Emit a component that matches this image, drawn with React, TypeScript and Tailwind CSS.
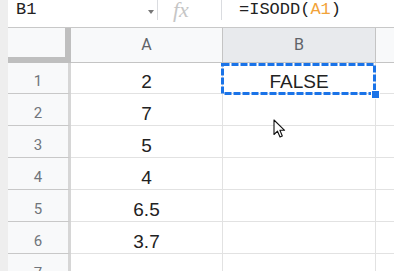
const rows = [
  { n: 1, a: "2", b: "FALSE" },
  { n: 2, a: "7", b: "" },
  { n: 3, a: "5", b: "" },
  { n: 4, a: "4", b: "" },
  { n: 5, a: "6.5", b: "" },
  { n: 6, a: "3.7", b: "" },
  { n: 7, a: "", b: "" },
]

const Selection = () => {
  return (
    <div className="absolute z-10 left-[-2px] top-0 w-[155px] h-[32px] pointer-events-none">
      <svg width="155" height="32" className="block">
        <rect x="1.5" y="1.5" width="152" height="29" fill="none" stroke="#1a73e8" strokeWidth="3" strokeDasharray="7 2" />
      </svg>
      <div className="absolute right-[-4px] bottom-[-4px] w-[9px] h-[9px] bg-[#1a73e8] border border-white" />
    </div>
  )
}

const Cursor = () => {
  return (
    <svg width="14" height="20" viewBox="0 0 14 20" className="absolute z-20 left-[265px] top-[56px]">
      <path
        d="M1 1 L1 15.5 L4.5 12.2 L7 18 L9.3 17 L6.9 11.3 L11.6 11.3 Z"
        fill="white"
        stroke="#111"
        strokeWidth="1.1"
        strokeLinejoin="round"
      />
    </svg>
  )
}

export default function App() {
  return (
    <div className="w-[394px] h-[271px] overflow-hidden flex bg-[#ececec]">
      <div className="w-[8px] shrink-0 bg-[#eeeeee]" />
      <div className="flex-1 min-w-0 flex flex-col bg-white">
        {/* formula bar */}
        <div className="h-[28px] shrink-0 flex items-start border-b border-[#c8c8c8] font-['Liberation_Mono',monospace] text-[17px] leading-[17px] text-[#222]">
          <div className="w-[149px] flex items-start justify-between pl-[8px] pr-[3px]">
            <span className="mt-[1px]">B1</span>
            <span className="mt-[10px] w-0 h-0 border-l-[3px] border-r-[3px] border-t-[4px] border-l-transparent border-r-transparent border-t-[#777]" />
          </div>
          <div className="w-px h-[20px] bg-[#dadce0]" />
          <div className="w-[63px] pl-[15px] font-['Liberation_Serif',serif] italic text-[22px] leading-[20px] text-[#c6c6c6]">
            fx
          </div>
          <div className="w-px h-[20px] bg-[#dadce0]" />
          <div className="pl-[17px] mt-[1px] whitespace-nowrap">
            =ISODD(<span className="text-[#f2a33a]">A1</span>)
          </div>
        </div>

        {/* column headers */}
        <div className="h-[35px] shrink-0 flex font-['Roboto',sans-serif] text-[16px] text-[#5f6368]">
          <div className="w-[63px] shrink-0 bg-[#f8f9fa] border-r-[6px] border-b-[6px] border-[#bfbfbf]" />
          <div className="w-[152px] shrink-0 flex items-center justify-center bg-[#f8f9fa] border-r border-b border-[#c4c4c4]">
            A
          </div>
          <div className="w-[153px] shrink-0 flex items-center justify-center bg-[#e8eaed] border-r border-b border-[#c4c4c4]">
            B
          </div>
          <div className="flex-1 bg-[#f8f9fa] border-b border-[#c4c4c4]" />
        </div>

        {/* grid */}
        <div className="relative flex flex-col">
          {rows.map((r) => (
            <div key={r.n} className={`flex shrink-0 ${r.n === 1 ? "h-[31px]" : "h-[32px]"}`}>
              <div className="w-[63px] shrink-0 flex items-end justify-center pb-[4px] bg-[#f8f9fa] border-r-[3px] border-b border-r-[#d6d6d6] border-b-[#c8c8c8] font-['Roboto',sans-serif] text-[15px] leading-none text-[#70757a]">
                {r.n}
              </div>
              <div className="w-[152px] shrink-0 flex items-end justify-center pb-[2px] border-r border-b border-[#e2e2e2] font-['Liberation_Sans',Arial,sans-serif] text-[19px] leading-none text-[#222]">
                {r.a}
              </div>
              <div className="relative w-[153px] shrink-0 flex items-end justify-center pb-[2px] border-r border-b border-[#e2e2e2] font-['Liberation_Sans',Arial,sans-serif] text-[19px] leading-none text-[#222]">
                {r.b}
                {r.n === 1 && <Selection />}
              </div>
              <div className="flex-1 border-b border-[#e2e2e2]" />
            </div>
          ))}
          <Cursor />
        </div>
      </div>
    </div>
  )
}
